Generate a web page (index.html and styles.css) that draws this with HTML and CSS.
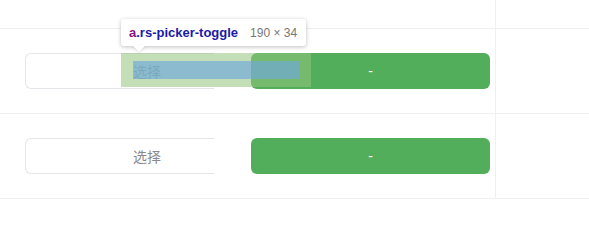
FILE: index.html
```html
<!DOCTYPE html>
<html lang="zh">
<head>
<meta charset="utf-8">
<link rel="stylesheet" href="styles.css">
</head>
<body>
<div class="table">
  <div class="row row-head">
    <div class="cell"></div>
    <div class="cell-rest"></div>
  </div>
  <div class="row">
    <div class="cell">
      <div class="picker"><span class="placeholder">选择</span></div>
      <button class="btn">-</button>
    </div>
    <div class="cell-rest"></div>
  </div>
  <div class="row">
    <div class="cell">
      <div class="picker"><span class="placeholder">选择</span></div>
      <button class="btn">-</button>
    </div>
    <div class="cell-rest"></div>
  </div>
</div>

<div class="hl-padding"><div class="hl-content"></div></div>
<div class="tip">
  <span class="tip-name"><span class="tip-tag">a</span>.rs-picker-toggle</span>
  <span class="tip-size">190 × 34</span>
</div>
<div class="tip-arrow"></div>
</body>
</html>
```

FILE: styles.css
```css
html, body {
  margin: 0;
  padding: 0;
  background: #fff;
  font-family: "Liberation Sans", "Noto Sans CJK SC", sans-serif;
}

.table {
  width: 589px;
}

.row {
  display: flex;
  height: 84px;
  border-bottom: 1px solid #f0f0f3;
}

.row-head {
  height: 28px;
}

.cell {
  width: 496px;
  border-right: 1px solid #f0f0f3;
  display: flex;
  align-items: center;
  padding-left: 25px;
  box-sizing: border-box;
}

.cell-rest {
  flex: 1;
}

.picker {
  width: 189px;
  height: 36px;
  box-sizing: border-box;
  border: 1px solid #e5e5ea;
  border-right: none;
  border-radius: 6px 0 0 6px;
  display: flex;
  align-items: center;
  padding-left: 107px;
}

.placeholder {
  font-family: "Noto Sans CJK SC", sans-serif;
  font-size: 14px;
  color: #8a8a8e;
  line-height: 18px;
}

.btn {
  margin-left: 37px;
  width: 239px;
  height: 36px;
  border: none;
  border-radius: 6px;
  background: #52ae5a;
  color: #fff;
  font-family: "Liberation Sans", sans-serif;
  font-size: 14px;
  padding: 0;
}

.hl-padding {
  position: absolute;
  left: 121px;
  top: 53px;
  width: 190px;
  height: 34px;
  padding: 8px 12px;
  box-sizing: border-box;
  background: rgba(147, 196, 125, 0.55);
}

.hl-content {
  width: 166px;
  height: 18px;
  background: rgba(111, 168, 220, 0.66);
}

.tip {
  position: absolute;
  left: 121px;
  top: 19px;
  width: 185px;
  height: 27px;
  box-sizing: border-box;
  padding: 0 8px;
  background: #fff;
  border-radius: 3px;
  box-shadow: 0 1px 4px rgba(0, 0, 0, 0.25);
  display: flex;
  align-items: center;
  gap: 12px;
  white-space: nowrap;
}

.tip-name {
  font-size: 13px;
  font-weight: bold;
  color: #1a1aa6;
}

.tip-tag {
  color: #881280;
}

.tip-size {
  font-size: 12px;
  color: #777;
}

.tip-arrow {
  position: absolute;
  left: 132px;
  top: 45px;
  width: 0;
  height: 0;
  border-left: 7px solid transparent;
  border-right: 7px solid transparent;
  border-top: 7px solid #fff;
  filter: drop-shadow(0 1px 1px rgba(0, 0, 0, 0.12));
}
```
